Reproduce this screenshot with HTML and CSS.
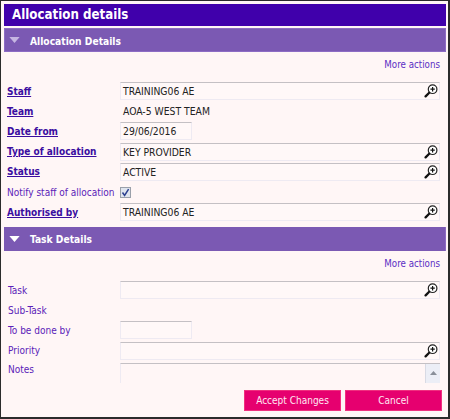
FILE: index.html
```html
<!DOCTYPE html>
<html lang="en">
<head>
<meta charset="utf-8">
<title>Allocation details</title>
<link rel="stylesheet" href="styles.css">
</head>
<body>
<svg class="defs" width="0" height="0" aria-hidden="true">
  <symbol id="lens" viewBox="0 0 14 14">
    <circle cx="8.6" cy="5.2" r="4.3" fill="#fff" stroke="#222" stroke-width="1.2"/>
    <path d="M8.6 3v4.4M6.4 5.2h4.4" stroke="#111" stroke-width="1.2" fill="none"/>
    <path d="M5.2 8.8L1.6 12.4" stroke="#111" stroke-width="2.3" stroke-linecap="round" fill="none"/>
  </symbol>
  <symbol id="arrow" viewBox="0 0 12 7">
    <path d="M0 0H12L6 7Z"/>
  </symbol>
</svg>
<div class="window">
  <h1 class="title">Allocation details</h1>

  <h2 class="section section-first">
    <svg class="arrow arrow-dim"><use href="#arrow"/></svg>
    <span>Allocation Details</span>
  </h2>
  <div class="actions"><a class="more">More actions</a></div>
  <div class="form">
    <div class="row"><a class="label req">Staff</a><div class="field"><span>TRAINING06 AE</span><svg class="lens"><use href="#lens"/></svg></div></div>
    <div class="row"><a class="label req">Team</a><div class="plain">AOA-5 WEST TEAM</div></div>
    <div class="row"><a class="label req">Date from</a><div class="field short"><span>29/06/2016</span></div></div>
    <div class="row"><a class="label req">Type of allocation</a><div class="field"><span>KEY PROVIDER</span><svg class="lens"><use href="#lens"/></svg></div></div>
    <div class="row"><a class="label req">Status</a><div class="field"><span>ACTIVE</span><svg class="lens"><use href="#lens"/></svg></div></div>
    <div class="row"><span class="label">Notify staff of allocation</span><span class="check"><svg viewBox="0 0 9 9" width="9" height="9"><path d="M1.5 4.5L3.6 7.4L7.6 1.2" fill="none" stroke="#2b3f8f" stroke-width="1.5"/></svg></span></div>
    <div class="row"><a class="label req">Authorised by</a><div class="field"><span>TRAINING06 AE</span><svg class="lens"><use href="#lens"/></svg></div></div>
  </div>

  <h2 class="section section-second">
    <svg class="arrow"><use href="#arrow"/></svg>
    <span>Task Details</span>
  </h2>
  <div class="actions"><a class="more">More actions</a></div>
  <div class="form form-task">
    <div class="row"><span class="label">Task</span><div class="field"><span></span><svg class="lens"><use href="#lens"/></svg></div></div>
    <div class="row"><span class="label">Sub-Task</span></div>
    <div class="row"><span class="label">To be done by</span><div class="field short"></div></div>
    <div class="row"><span class="label">Priority</span><div class="field"><span></span><svg class="lens"><use href="#lens"/></svg></div></div>
    <div class="row row-notes"><span class="label">Notes</span><div class="notes"><div class="scroll"><svg width="7" height="4" viewBox="0 0 7 4"><path d="M0 4L3.5 0L7 4Z" fill="#8a8f99"/></svg></div></div></div>
  </div>

  <div class="buttons">
    <button class="btn" type="button">Accept Changes</button>
    <button class="btn" type="button">Cancel</button>
  </div>
</div>
</body>
</html>
```

FILE: styles.css
```css
* { box-sizing: border-box; }
html, body { margin: 0; padding: 0; }
body {
  width: 450px;
  height: 419px;
  overflow: hidden;
  background: #fff;
  font-family: "DejaVu Sans", Verdana, sans-serif;
  font-stretch: condensed;
  font-size: 10px;
}
.defs { position: absolute; }
.window {
  width: 450px;
  height: 419px;
  background: #fff6f6;
  border-style: solid;
  border-color: #2b2b2b;
  border-width: 1px 2px 2px 1px;
  padding: 3px 2px 0 3px;
  overflow: hidden;
}
.title {
  margin: 0;
  height: 22px;
  background: #4000ab;
  color: #fff;
  font-size: 13.2px;
  font-weight: bold;
  line-height: 22px;
  padding-left: 8px;
}
.section {
  margin: 0;
  height: 24px;
  display: flex;
  align-items: center;
  background: #7b59b3;
  color: #fff;
  font-size: 10.2px;
  font-weight: bold;
  padding-left: 5px;
  gap: 10px;
}
.section span { position: relative; top: 1px; }
.section-first { margin-top: 2px; border: 1px solid #8d6cc4; padding-left: 4px; }
.section-second { margin-top: 4.6px; border-right: 1px solid #8d6cc4; }
.arrow { width: 11px; height: 6px; fill: #fff; flex: none; }
.arrow-dim { fill: #c6b6e2; }
.actions {
  height: 29px;
  padding: 6px 6px 0 0;
  text-align: right;
  line-height: 14px;
}
.more { color: #5b2fc4; font-size: 9.7px; }
.form { display: flex; flex-direction: column; }
.row {
  height: 20.2px;
  display: flex;
  align-items: center;
  flex: none;
}
.label {
  width: 116px;
  flex: none;
  padding-left: 3px;
  color: #5a22b8;
  white-space: nowrap;
}
.req {
  color: #3a0da0;
  font-weight: bold;
  text-decoration: underline;
}
.field {
  width: 320px;
  height: 18px;
  display: flex;
  align-items: center;
  justify-content: space-between;
  padding: 0 1px 0 2px;
  color: #222;
  background: #fff8f8;
  border: 1px solid #eeeaf2;
  border-top: 1px solid #c4c0c4;
  flex: none;
  font-size: 10.3px;
}
.short { width: 72px; }
.plain { padding-left: 3px; color: #222; font-size: 10.3px; }
.lens { width: 14px; height: 14px; flex: none; }
.check {
  width: 11px;
  height: 11px;
  display: flex;
  align-items: center;
  justify-content: center;
  background: #dfe4ee;
  border: 1px solid #9aa0aa;
}
.form-task .label { padding-left: 4px; }
.row-notes { height: 20px; margin-top: 2px; align-items: flex-start; }
.row-notes .label { padding-top: 1px; }
.notes {
  width: 320px;
  height: 20px;
  border-top: 1px solid #c4c0c4;
  border-left: 1px solid #eeeaf2;
  display: flex;
  justify-content: flex-end;
}
.scroll {
  width: 15px;
  height: 19px;
  background: #eceef6;
  border-left: 1px solid #d8dae4;
  display: flex;
  justify-content: center;
  padding-top: 7px;
}
.buttons {
  display: flex;
  justify-content: flex-end;
  gap: 4px;
  margin-top: 7.6px;
  padding-right: 4px;
}
.btn {
  width: 97px;
  height: 21px;
  padding: 0;
  border: 1px solid #f0307f;
  background: #e6006f;
  color: #ffe8f2;
  font-family: inherit;
  font-stretch: condensed;
  font-size: 10px;
}
```
